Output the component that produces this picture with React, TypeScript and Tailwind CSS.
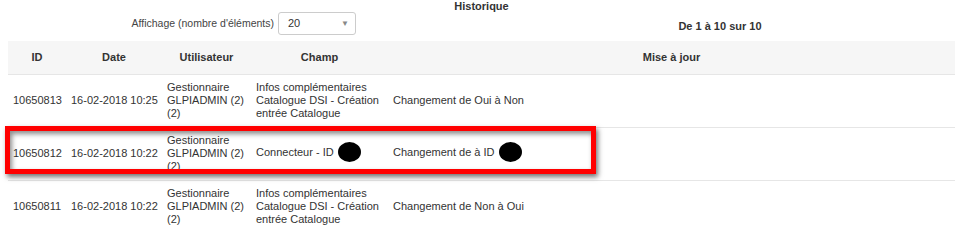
import React from 'react';

type Row = {
  id: string;
  date: string;
  field: React.ReactNode;
  update: React.ReactNode;
};

const Blob: React.FC = () => (
  <span className="inline-block align-middle w-[23px] h-[20px] rounded-[50%] bg-black ml-[1px] -mt-[3px]" />
);

const rows: Row[] = [
  {
    id: '10650813',
    date: '16-02-2018 10:25',
    field: (
      <>
        Infos complémentaires
        <br />
        Catalogue DSI - Création
        <br />
        entrée Catalogue
      </>
    ),
    update: 'Changement de Oui à Non',
  },
  {
    id: '10650812',
    date: '16-02-2018 10:22',
    field: (
      <>
        Connecteur - ID <Blob />
      </>
    ),
    update: (
      <>
        Changement de à ID <Blob />
      </>
    ),
  },
  {
    id: '10650811',
    date: '16-02-2018 10:22',
    field: (
      <>
        Infos complémentaires
        <br />
        Catalogue DSI - Création
        <br />
        entrée Catalogue
      </>
    ),
    update: 'Changement de Non à Oui',
  },
];

const App: React.FC = () => {
  return (
    <div className="relative w-[955px] h-[233px] bg-white overflow-hidden font-['Liberation_Sans',Arial,sans-serif] text-[11px] leading-[13px] text-[#333]">
      <div className="pl-2">
        <div className="h-[12px] text-center font-bold">Historique</div>

        <div className="flex items-start h-[29px]">
          <div className="w-[266px] h-[23px] flex items-center justify-end">
            <span className="text-[10.5px] text-[#444]">Affichage (nombre d'éléments)</span>
          </div>
          <div className="ml-[4px] w-[78px] h-[23px] border border-[#ccc] rounded-[3px] flex items-center justify-between pl-[9px] pr-[6px]">
            <span>20</span>
            <span className="text-[8px] text-[#888]">▼</span>
          </div>
          <div className="ml-[164px] w-[400px] pt-[8px] text-center font-bold">
            De 1 à 10 sur 10
          </div>
        </div>

        <table className="w-[947px] table-fixed border-collapse">
          <thead>
            <tr className="bg-[#f6f6f6] border-b border-[#e6e6e6] h-[33px]">
              <th className="w-[58px] font-bold">ID</th>
              <th className="w-[96px] font-bold">Date</th>
              <th className="w-[89px] font-bold">Utilisateur</th>
              <th className="w-[137px] font-bold">Champ</th>
              <th className="font-bold">Mise à jour</th>
            </tr>
          </thead>
          <tbody>
            {rows.map((r) => (
              <tr key={r.id} className="border-b border-[#e6e6e6] h-[53px]">
                <td className="pl-[5px] align-middle whitespace-nowrap">{r.id}</td>
                <td className="pl-[5px] align-middle whitespace-nowrap">{r.date}</td>
                <td className="pl-[5px] align-middle">
                  Gestionnaire
                  <br />
                  GLPIADMIN (2)
                  <br />
                  (2)
                </td>
                <td className="pl-[5px] align-middle whitespace-nowrap">{r.field}</td>
                <td className="pl-[5px] align-middle whitespace-nowrap">{r.update}</td>
              </tr>
            ))}
          </tbody>
        </table>
      </div>

      <div className="absolute left-[5px] top-[126px] w-[591px] h-[48px] border-[5px] border-[#ff0000] shadow-[2px_3px_5px_rgba(0,0,0,0.55),inset_2px_3px_5px_rgba(0,0,0,0.45)]" />
    </div>
  );
};

export default App;
